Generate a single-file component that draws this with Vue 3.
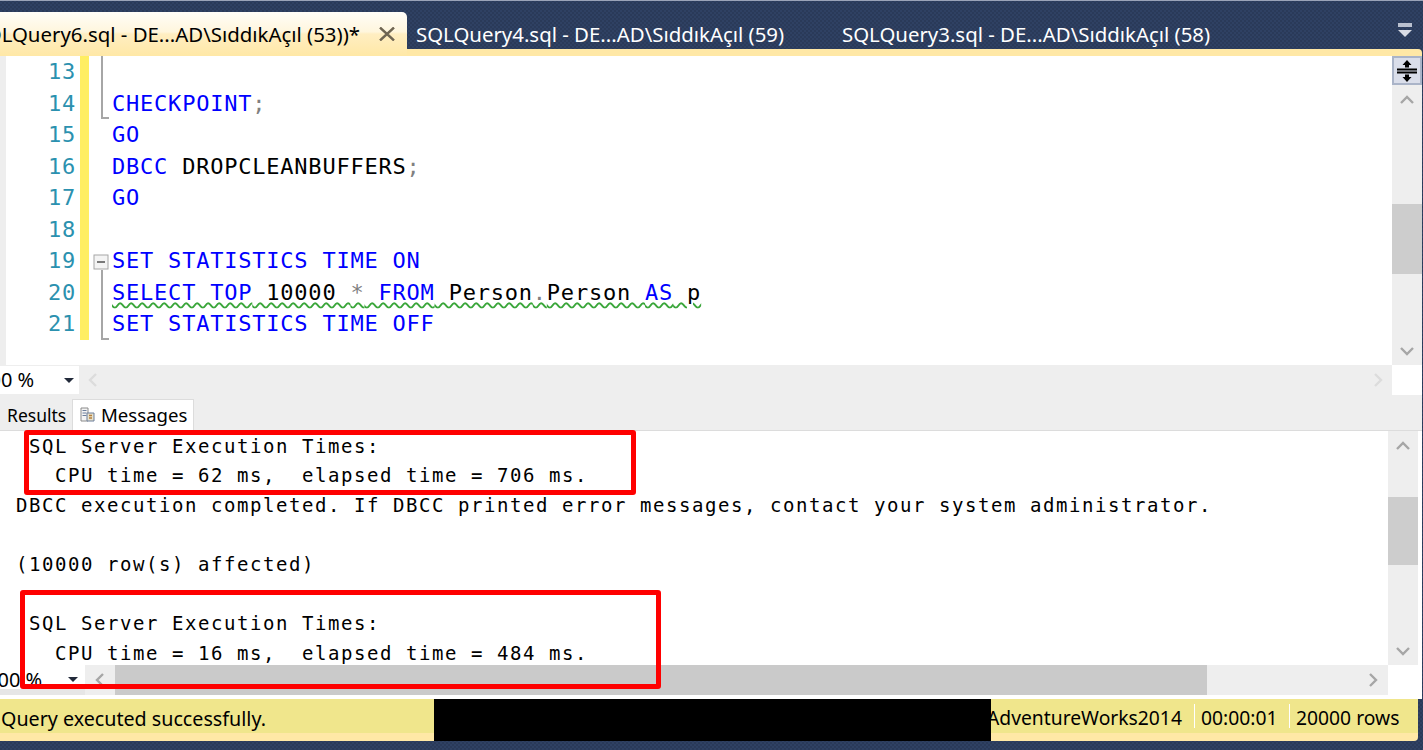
<script setup>
const tabs = [
  { text: 'SQLQuery4.sql - DE...AD\\SıddıkAçıl (59)', width: 426 },
  { text: 'SQLQuery3.sql - DE...AD\\SıddıkAçıl (58)', width: 400 }
]
const B = 'k', T = 't', P = 'p'
const lines = [
  { n: 13, o: 'bar', parts: [] },
  { n: 14, o: 'end', parts: [[B, 'CHECKPOINT'], [P, ';']] },
  { n: 15, parts: [[B, 'GO']] },
  { n: 16, parts: [[B, 'DBCC'], [T, ' DROPCLEANBUFFERS'], [P, ';']] },
  { n: 17, parts: [[B, 'GO']] },
  { n: 18, parts: [] },
  { n: 19, o: 'box', parts: [[B, 'SET STATISTICS TIME ON']] },
  { n: 20, o: 'bar', wavy: true, parts: [[B, 'SELECT TOP'], [T, ' 10000 '], [P, '*'], [B, ' FROM'], [T, ' Person'], [P, '.'], [T, 'Person '], [B, 'AS'], [T, ' p']] },
  { n: 21, o: 'end', parts: [[B, 'SET STATISTICS TIME OFF']] }
]
const messages = [
  ' SQL Server Execution Times:',
  '   CPU time = 62 ms,  elapsed time = 706 ms.',
  'DBCC execution completed. If DBCC printed error messages, contact your system administrator.',
  '',
  '(10000 row(s) affected)',
  '',
  ' SQL Server Execution Times:',
  '   CPU time = 16 ms,  elapsed time = 484 ms.'
]
</script>

<template>
  <div class="app">
    <header class="tabbar">
      <div class="tab active">
        <span class="tab-text">SQLQuery6.sql - DE...AD\SıddıkAçıl (53))*</span>
        <svg class="close" width="16" height="14" viewBox="0 0 16 14"><path d="M1 0.5 L15 13.5 M15 0.5 L1 13.5" stroke="#6f6552" stroke-width="2.4" fill="none"/></svg>
      </div>
      <div v-for="t in tabs" :key="t.text" class="tab idle" :style="{ width: t.width + 'px' }">{{ t.text }}</div>
      <svg class="overflow" width="16" height="15" viewBox="0 0 16 15"><path d="M1 0H15V4H1Z" fill="#b9c0cf"/><path d="M1 7H15L8 14Z" fill="#d8dce6"/></svg>
    </header>
    <div class="tabline"></div>

    <section class="editor">
      <div class="code">
        <div v-for="l in lines" :key="l.n" class="row">
          <span class="num">{{ l.n }}</span>
          <span class="change"></span>
          <span class="outline" :class="l.o">
            <svg v-if="l.o === 'box'" class="fold" width="16" height="16" viewBox="0 0 16 16"><rect x="1" y="1" width="14" height="14" fill="#f4f4f4" stroke="#a6a6a6"/><path d="M4 8H12" stroke="#444" stroke-width="1.4"/></svg>
          </span>
          <span class="src" :class="{ wavy: l.wavy }"><span v-for="(p, i) in l.parts" :key="i" :class="p[0]">{{ p[1] }}</span></span>
        </div>
      </div>
      <div class="vbar first">
        <div class="split">
          <svg width="22" height="24" viewBox="0 0 22 24"><path d="M11 1 L15.5 6 H13 V8.5 H9 V6 H6.5Z M11 23 L15.5 18 H13 V15.5 H9 V18 H6.5Z" fill="#000"/><path d="M1 10.5H21 M1 13.5H21" stroke="#000" stroke-width="1.8"/></svg>
        </div>
        <div class="arrow"><svg width="14" height="10" viewBox="0 0 14 10"><path d="M1 8 L7 2 L13 8" fill="none" stroke="#a6a6a6" stroke-width="2.4"/></svg></div>
        <div class="track t1"><div class="thumb"></div></div>
        <div class="arrow"><svg width="14" height="10" viewBox="0 0 14 10"><path d="M1 2 L7 8 L13 2" fill="none" stroke="#a6a6a6" stroke-width="2.4"/></svg></div>
      </div>
    </section>

    <div class="hrow">
      <div class="combo c1"><span class="pct p1">100 %</span><i class="caret"></i></div>
      <div class="hbar">
        <div class="harrow"><svg width="10" height="14" viewBox="0 0 10 14"><path d="M8 1 L2 7 L8 13" fill="none" stroke="#dcdcdc" stroke-width="2.4"/></svg></div>
        <div class="hfill"></div>
        <div class="harrow"><svg width="10" height="14" viewBox="0 0 10 14"><path d="M2 1 L8 7 L2 13" fill="none" stroke="#dcdcdc" stroke-width="2.4"/></svg></div>
      </div>
      <div class="corner"></div>
    </div>

    <nav class="resulttabs">
      <div class="rtab">Results</div>
      <div class="rtab on">
        <svg width="15" height="15" viewBox="0 0 15 15"><path d="M1 1H8V14H1Z" fill="#f4f4f4" stroke="#8a8a8a"/><path d="M2.5 3.5H6.5M2.5 6H6.5M2.5 8.5H6.5" stroke="#6d7f9c"/><path d="M7 6H14V14H7Z" fill="#e8e2cc" stroke="#6d7f9c"/><path d="M9 8.5H12M9 11H12" stroke="#b5803c" stroke-width="1.4"/></svg>
        Messages
      </div>
    </nav>

    <section class="pane">
      <div class="pane-top">
        <div class="msgs"><div v-for="(m, i) in messages" :key="i" class="msg">{{ m }}</div></div>
        <div class="vbar second">
          <div class="arrow a2"><svg width="14" height="10" viewBox="0 0 14 10"><path d="M1 8 L7 2 L13 8" fill="none" stroke="#a6a6a6" stroke-width="2.4"/></svg></div>
          <div class="track t2"><div class="thumb"></div></div>
          <div class="arrow a2"><svg width="14" height="10" viewBox="0 0 14 10"><path d="M1 2 L7 8 L13 2" fill="none" stroke="#a6a6a6" stroke-width="2.4"/></svg></div>
        </div>
      </div>
      <div class="pane-h">
        <div class="combo c2"><span class="pct p2">100 %</span><i class="caret"></i></div>
        <div class="hbar">
          <div class="harrow"><svg width="10" height="14" viewBox="0 0 10 14"><path d="M8 1 L2 7 L8 13" fill="none" stroke="#a6a6a6" stroke-width="2.4"/></svg></div>
          <div class="hthumb"></div>
          <div class="hfill"></div>
          <div class="harrow"><svg width="10" height="14" viewBox="0 0 10 14"><path d="M2 1 L8 7 L2 13" fill="none" stroke="#a6a6a6" stroke-width="2.4"/></svg></div>
        </div>
      </div>
      <div class="redbox r1"></div>
      <div class="redbox r2"></div>
    </section>

    <footer class="status">
      <div class="seg left">Query executed successfully.</div>
      <div class="redact"></div>
      <div class="seg right">
        <span class="db">AdventureWorks2014</span>
        <span class="cell">00:00:01</span>
        <span class="cell">20000 rows</span>
      </div>
    </footer>
  </div>
</template>

<style scoped>
.app {
  position: relative;
  width: 1423px;
  height: 750px;
  overflow: hidden;
  background: repeating-conic-gradient(#2f4163 0 25%, #2a3a59 0 50%) 0 0 / 4px 4px;
  font-family: "Noto Sans", "Open Sans", sans-serif;
  color: #000;
}
.tabbar {
  display: flex;
  height: 49px;
  padding-top: 11px;
  box-sizing: border-box;
  border-top: 1px solid #9aa3b8;
  position: relative;
}
.tab { white-space: nowrap; font-size: 20.4px; line-height: 28px; }
.active {
  width: 407px;
  height: 44px;
  flex: none;
  display: flex;
  justify-content: flex-end;
  align-items: center;
  box-sizing: border-box;
  padding: 0 12px 0 0;
  border-radius: 0 5px 0 0;
  background: linear-gradient(#fffdf8 0, #fff6dd 45%, #ffeec2 50%, #ffe8a6 100%);
  overflow: hidden;
}
.tab-text { flex: none; margin-right: 19px; margin-bottom: 0; }
.close { flex: none; }
.idle {
  flex: none;
  box-sizing: border-box;
  padding: 8px 0 0 9px;
  color: #fff;
}
.overflow { position: absolute; right: 10px; top: 22px; }
.tabline {
  height: 7px;
  margin-right: 1px;
  background: #ffe8a6;
  border-radius: 0 4px 0 0;
}
.editor {
  display: flex;
  height: 309px;
  margin-right: 1px;
  background: #fff;
}
.code {
  flex: 1;
  border-left: 6px solid #eee;
  overflow: hidden;
}
.row {
  display: flex;
  height: 31.5px;
  font-family: "DejaVu Sans Mono", monospace;
  font-size: 22px;
  line-height: 32.8px;
  letter-spacing: 0.78px;
}
.num { width: 70px; text-align: right; color: #2b91af; margin-right: 4px; flex: none; }
.change { width: 9px; background: #ffee62; flex: none; }
.outline { width: 23px; flex: none; position: relative; }
.outline.bar::before,
.outline.end::before {
  content: "";
  position: absolute;
  left: 12px;
  top: 0;
  bottom: 0;
  border-left: 2px solid #a6a6a6;
}
.outline.end::before { width: 6px; border-bottom: 2px solid #a6a6a6; }
.outline.box::after {
  content: "";
  position: absolute;
  left: 12px;
  top: 25px;
  bottom: 0;
  border-left: 2px solid #a6a6a6;
}
.fold { position: absolute; left: 4px; top: 9px; }
.src { white-space: pre; }
.src.wavy {
  text-decoration: underline wavy #3aa63a 1.6px;
  text-underline-offset: 2px;
}
.k { color: #00f; }
.t { color: #000; }
.p { color: #808080; }

.vbar { flex: none; display: flex; flex-direction: column; background: #eee; }
.first { width: 30px; }
.split {
  height: 29px;
  flex: none;
  box-sizing: border-box;
  border: 2px solid #aab4c8;
  background: #dadeea;
  display: flex;
  align-items: center;
  justify-content: center;
}
.arrow { height: 29px; flex: none; display: flex; align-items: center; justify-content: center; }
.track { flex: 1; position: relative; }
.thumb { position: absolute; left: 0; right: 0; background: #cdcdcd; }
.t1 .thumb { top: 90px; height: 70px; }
.t2 .thumb { top: 37px; height: 68px; }

.hrow { display: flex; height: 30px; margin-right: 1px; background: #eee; }
.combo {
  flex: none;
  position: relative;
  background: #fff;
  overflow: hidden;
  box-sizing: border-box;
  font-size: 20px;
  white-space: nowrap;
}
.c1 { width: 79px; height: 28px; margin-top: 1px; line-height: 27px; }
.c2 { width: 85px; line-height: 29px; background: #fff; border-bottom: 6px solid #e6e6e6; }
.pct { display: block; }
.p1 { margin-left: -22px; }
.p2 { margin-left: -14px; }
.caret {
  position: absolute;
  top: 12px;
  width: 0;
  height: 0;
  border: 5px solid transparent;
  border-top-color: #222a3a;
  border-bottom: 0;
}
.c1 .caret { left: 64px; }
.c2 .caret { left: 68px; }
.hbar { flex: 1; display: flex; background: #eee; }
.harrow { flex: none; width: 28px; display: flex; align-items: center; justify-content: center; }
.hfill { flex: 1; }
.hthumb { flex: none; width: 1092px; background: #cacaca; }
.corner { width: 30px; background: #fff; flex: none; }

.resulttabs {
  display: flex;
  align-items: flex-end;
  height: 36px;
  margin-right: 1px;
  background: #eee;
  box-sizing: border-box;
  border-bottom: 1px solid #dcdcdc;
}
.rtab {
  box-sizing: border-box;
  display: flex;
  align-items: center;
  gap: 6px;
  font-size: 17.5px;
  height: 29px;
  width: 72px;
  padding: 0 0 2px 7px;
}
.rtab.on {
  width: 122px;
  height: 32px;
  margin-bottom: -1px;
  background: #fff;
  border: 1px solid #dcdcdc;
  border-bottom: 0;
  font-size: 18.6px;
}

.pane {
  height: 268px;
  margin-right: 1px;
  background: #fff;
  display: flex;
  flex-direction: column;
}
.pane-top { height: 234px; display: flex; }
.msgs {
  flex: none;
  width: 1388px;
  padding: 0.6px 0 0 16px;
  box-sizing: border-box;
  overflow: hidden;
  font-family: "DejaVu Sans Mono", monospace;
  font-size: 19px;
  letter-spacing: 1.56px;
}
.msg { height: 29.6px; line-height: 29.6px; white-space: pre; }
.second { width: 30px; }
.a2 { height: 29px; }
.pane-h { height: 30px; width: 1388px; display: flex; }
.pane-h .harrow { width: 30px; }
.redbox {
  position: absolute;
  box-sizing: border-box;
  border: 5px solid #f00;
  border-radius: 3px;
}
.r1 { left: 24px; top: 430px; width: 612px; height: 65px; }
.r2 { left: 20px; top: 590px; width: 641px; height: 99px; }

.status { display: flex; height: 42px; font-size: 19.3px; }
.seg {
  box-sizing: border-box;
  border-bottom: 8px solid #ffe8a6;
  background: #f0e68c;
  height: 42px;
  line-height: 37px;
  white-space: nowrap;
}
.left { width: 434px; padding-left: 1px; flex: none; border-top: 1px solid #f0e68c; font-size: 19.7px; }
.redact { width: 557px; background: #000; flex: none; position: relative; z-index: 1; }
.right {
  width: 427px;
  flex: none;
  display: flex;
  border-radius: 0 0 4px 0;
}
.db { margin-left: -4px; width: 207px; flex: none; }
.cell { box-sizing: border-box; border-left: 1px solid #fff; height: 24px; margin-top: 5px; line-height: 27px; padding-left: 6px; flex: none; }
.cell:nth-child(2) { width: 95px; }
</style>

<style>
html, body { margin: 0; padding: 0; background: #2a3a59; }
</style>
